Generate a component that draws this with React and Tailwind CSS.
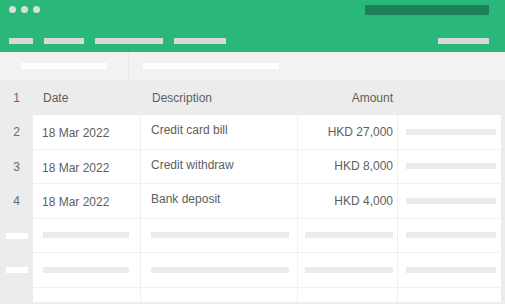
import React from "react";

const rows = [
  { n: "2", date: "18 Mar 2022", desc: "Credit card bill", amount: "HKD 27,000" },
  { n: "3", date: "18 Mar 2022", desc: "Credit withdraw", amount: "HKD 8,000" },
  { n: "4", date: "18 Mar 2022", desc: "Bank deposit", amount: "HKD 4,000" },
];

const Bar = ({ className }) => <div className={`h-[6px] bg-[#ebebeb] ${className}`} />;

const DataRow = ({ n, children, last }) => (
  <div className={`flex ${last ? "h-[14px]" : "h-[34.5px]"}`}>
    <div className="w-[33px] shrink-0 flex items-center justify-center text-[#6a6a6a]">{n}</div>
    <div className={`flex flex-1 bg-white ${last ? "" : "border-b border-[#f0f0f0]"}`}>
      {children}
    </div>
    <div className="w-[4px] shrink-0" />
  </div>
);

export default function App() {
  return (
    <div
      className="w-[505px] h-[304px] overflow-hidden bg-[#ececec] text-[12px] text-[#5e5e5e]"
      style={{ fontFamily: '"Liberation Sans", Arial, sans-serif' }}
    >
      {/* app bar */}
      <div className="h-[52px] bg-[#29b77a]">
        <div className="flex justify-between items-start pl-[9px] pr-[16px]">
          <div className="flex gap-[5px] pt-[6px]">
            <div className="w-[7px] h-[7px] rounded-full bg-[#dddddd]" />
            <div className="w-[7px] h-[7px] rounded-full bg-[#dddddd]" />
            <div className="w-[7px] h-[7px] rounded-full bg-[#dddddd]" />
          </div>
          <div className="mt-[5px] w-[124px] h-[10px] bg-[#1e7f58]" />
        </div>
        <div className="flex justify-between pl-[9px] pr-[16px] mt-[23px]">
          <div className="flex gap-[11px]">
            <div className="w-[24px] h-[6px] bg-[#d9d9d9]" />
            <div className="w-[40px] h-[6px] bg-[#d9d9d9]" />
            <div className="w-[68px] h-[6px] bg-[#d9d9d9]" />
            <div className="w-[52px] h-[6px] bg-[#d9d9d9]" />
          </div>
          <div className="w-[51px] h-[6px] bg-[#d9d9d9]" />
        </div>
      </div>

      {/* toolbar */}
      <div className="h-[28px] bg-[#f2f2f2] flex">
        <div className="w-[129px] border-r border-[#e8e8e8] flex items-center pl-[21px]">
          <div className="w-[86px] h-[6px] bg-white" />
        </div>
        <div className="flex items-center pl-[14px]">
          <div className="w-[136px] h-[6px] bg-white" />
        </div>
      </div>

      {/* header row */}
      <div className="flex h-[35px]">
        <div className="w-[33px] flex items-center justify-center text-[#6a6a6a]">1</div>
        <div className="w-[108px] flex items-center pl-[10px]">Date</div>
        <div className="w-[157px] flex items-center pl-[11px]">Description</div>
        <div className="w-[100px] flex items-center justify-end pr-[5px]">Amount</div>
      </div>

      {rows.map((r) => (
        <DataRow key={r.n} n={r.n}>
          <div className="w-[108px] shrink-0 border-r border-[#f0f0f0] flex items-center pl-[9px] pt-[3px]">
            {r.date}
          </div>
          <div className="w-[157px] shrink-0 border-r border-[#f0f0f0] flex items-center pl-[10px] pb-[3px]">
            {r.desc}
          </div>
          <div className="w-[100px] shrink-0 border-r border-[#f0f0f0] flex items-center justify-end pr-[4px]">
            {r.amount}
          </div>
          <div className="flex-1 flex items-center pl-[8px]">
            <Bar className="w-[90px]" />
          </div>
        </DataRow>
      ))}

      {[0, 1].map((i) => (
        <DataRow key={i} n={<div className="w-[22px] h-[6px] bg-white" />}>
          <div className="w-[108px] shrink-0 border-r border-[#f0f0f0] flex items-center pl-[10px]">
            <Bar className="w-[86px]" />
          </div>
          <div className="w-[157px] shrink-0 border-r border-[#f0f0f0] flex items-center pl-[10px]">
            <Bar className="w-[138px]" />
          </div>
          <div className="w-[100px] shrink-0 border-r border-[#f0f0f0] flex items-center pl-[7px]">
            <Bar className="w-[88px]" />
          </div>
          <div className="flex-1 flex items-center pl-[8px]">
            <Bar className="w-[90px]" />
          </div>
        </DataRow>
      ))}

      <DataRow n="" last>
        <div className="w-[108px] shrink-0 border-r border-[#f0f0f0]" />
        <div className="w-[157px] shrink-0 border-r border-[#f0f0f0]" />
        <div className="w-[100px] shrink-0 border-r border-[#f0f0f0]" />
        <div className="flex-1" />
      </DataRow>
    </div>
  );
}
